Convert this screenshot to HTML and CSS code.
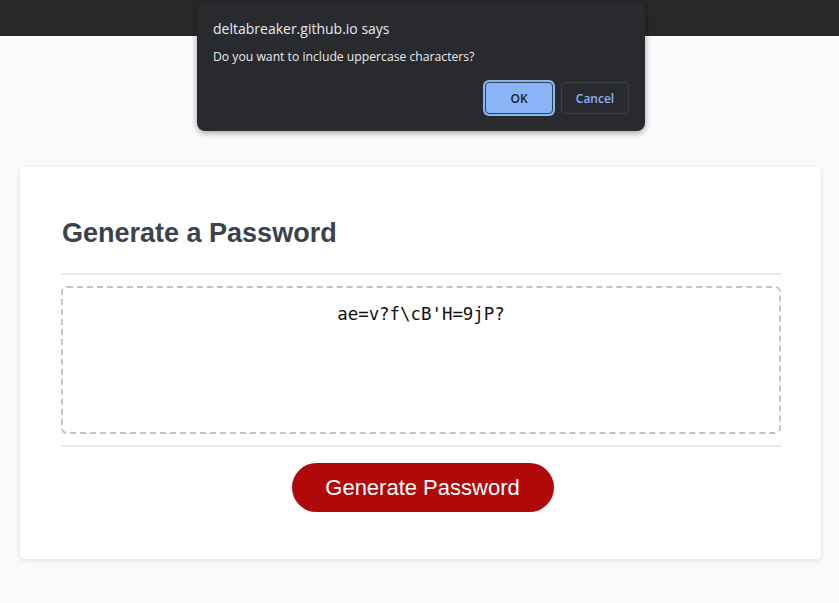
FILE: index.html
```html
<!DOCTYPE html>
<html lang="en">
<head>
<meta charset="utf-8">
<title>Password Generator</title>
<link rel="stylesheet" href="styles.css">
</head>
<body>
<header class="topbar"></header>
<div class="wrapper">
  <div class="card">
    <div class="card-header">
      <h2 class="title">Generate a Password</h2>
    </div>
    <div class="card-body">
      <textarea class="password" readonly>ae=v?f\cB'H=9jP?</textarea>
    </div>
    <div class="card-footer">
      <button class="btn">Generate Password</button>
    </div>
  </div>
</div>
<div class="dialog">
  <div class="dialog-title">deltabreaker.github.io says</div>
  <div class="dialog-msg">Do you want to include uppercase characters?</div>
  <div class="dialog-actions">
    <button class="dbtn ok">OK</button>
    <button class="dbtn cancel">Cancel</button>
  </div>
</div>
</body>
</html>
```
FILE: styles.css
```css
* { box-sizing: border-box; }
html, body { margin: 0; padding: 0; }
body {
  background: #f9fafb;
  font-family: "Liberation Sans", Arial, sans-serif;
  width: 839px;
  height: 603px;
  overflow: hidden;
}
.topbar {
  height: 36px;
  background: #282828;
}
.wrapper {
  padding: 131px 18px 0 20px;
}
.card {
  background: #fff;
  border-radius: 5px;
  box-shadow: 0 1px 5px rgba(0,0,0,0.12);
  padding: 0 40px 0 41px;
  height: 392px;
}
.card-header {
  padding-top: 48px;
  border-bottom: 2px solid #e7e9eb;
  height: 108px;
}
.title {
  margin: 0;
  font-size: 27px;
  line-height: 36px;
  font-weight: bold;
  color: #3a434c;
  padding-left: 1px;
}
.card-body {
  padding: 11px 0 11px;
  border-bottom: 2px solid #e7e9eb;
}
.password {
  display: block;
  width: 100%;
  height: 148px;
  border: 2px dashed #c0c4cc;
  border-radius: 6px;
  resize: none;
  outline: none;
  text-align: center;
  font-family: "DejaVu Sans Mono", "Liberation Mono", monospace;
  font-size: 17.4px;
  line-height: 22px;
  padding: 15px 10px;
  color: #111;
  background: #fff;
  overflow: hidden;
}
.card-footer {
  display: flex;
  justify-content: center;
  padding-top: 16px;
}
.btn {
  width: 262px;
  height: 49px;
  border: none;
  border-radius: 25px;
  background: #b00909;
  color: #fff;
  font-family: "Liberation Sans", Arial, sans-serif;
  font-size: 22px;
  padding: 0;
  margin-left: 3px;
}
.dialog {
  position: absolute;
  left: 197px;
  top: 1px;
  width: 448px;
  height: 130px;
  background: #292a2d;
  border-radius: 8px;
  box-shadow: 0 2px 6px rgba(0,0,0,0.35);
  font-family: "Open Sans", "Noto Sans", sans-serif;
  color: #e8eaed;
  padding: 18px 16px 0 16px;
}
.dialog-title {
  font-size: 14px;
  line-height: 20px;
}
.dialog-msg {
  font-size: 12.2px;
  line-height: 18px;
  margin-top: 9px;
}
.dialog-actions {
  display: flex;
  justify-content: flex-end;
  gap: 8px;
  margin-top: 16px;
}
.dbtn {
  width: 68px;
  height: 32px;
  border-radius: 4px;
  font-family: "Open Sans", "Noto Sans", sans-serif;
  font-size: 12px;
  font-weight: 600;
  padding: 0;
}
.ok {
  background: #8ab4f8;
  color: #202124;
  border: 1px solid #3c4043;
  box-shadow: 0 0 0 2px #8ab4f8;
}
.cancel {
  background: transparent;
  color: #8ab4f8;
  border: 1px solid #3c4043;
}
```
